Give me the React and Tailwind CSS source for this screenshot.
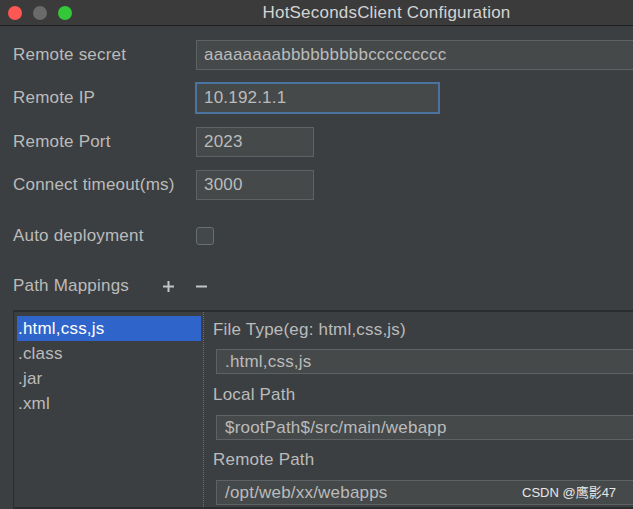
import React from "react";

const font = { fontFamily: '"Liberation Sans", "Noto Sans CJK SC", sans-serif' };

function Field({ label, children, top, height }) {
  return (
    <div className={`flex items-center ${top} ${height}`}>
      <div className="w-[183px] shrink-0 text-[17px] tracking-[0.2px] text-[#bbbbbb]">{label}</div>
      {children}
    </div>
  );
}

function TextBox({ value, size = "h-[30px]", className = "" }) {
  return (
    <div
      className={`${size} border border-[#5e6264] bg-[#45494a] px-[7px] flex items-center text-[17px] tracking-[0.2px] text-[#bbbbbb] whitespace-nowrap ${className}`}
    >
      {value}
    </div>
  );
}

function PanelLabel({ children, top }) {
  return (
    <div className={`${top} h-[24px] flex items-center text-[17px] tracking-[0.2px] text-[#bbbbbb]`}>
      {children}
    </div>
  );
}

export default function App() {
  const mappings = [".html,css,js", ".class", ".jar", ".xml"];

  return (
    <div
      className="relative w-[633px] h-[509px] overflow-hidden bg-[#3c3f41] flex flex-col"
      style={font}
    >
      {/* Title bar */}
      <div className="relative h-[26px] shrink-0 bg-[#3b3b3b] border-b border-[#1f1f1f] flex items-center">
        <div className="flex items-center gap-[11px] pl-[8px]">
          <span className="w-[14px] h-[14px] rounded-full bg-[#fd5753]" />
          <span className="w-[14px] h-[14px] rounded-full bg-[#6a6a6a]" />
          <span className="w-[14px] h-[14px] rounded-full bg-[#34c73a]" />
        </div>
        <div className="flex-1 text-center pl-[68px] text-[17px] tracking-[0.2px] text-[#d4d4d4]">
          HotSecondsClient Configuration
        </div>
      </div>

      {/* Form */}
      <div className="pl-[13px] flex flex-col">
        <Field label="Remote secret" top="mt-[14px]" height="h-[30px]">
          <TextBox value="aaaaaaaabbbbbbbbbccccccccc" className="flex-1 -mr-[4px]" />
        </Field>
        <Field label="Remote IP" top="mt-[12px]" height="h-[32px]">
          <div className="w-[245px] h-[32px] -ml-[1px] border-2 border-[#4a73a0] bg-[#45494a] px-[7px] flex items-center text-[17px] tracking-[0.2px] text-[#bbbbbb]">
            10.192.1.1
          </div>
        </Field>
        <Field label="Remote Port" top="mt-[13px]" height="h-[30px]">
          <TextBox value="2023" className="w-[118px]" />
        </Field>
        <Field label="Connect timeout(ms)" top="mt-[13px]" height="h-[30px]">
          <TextBox value="3000" className="w-[118px]" />
        </Field>
        <Field label="Auto deployment" top="mt-[22px]" height="h-[28px]">
          <div className="w-[18px] h-[18px] rounded-[3px] border border-[#6b6e70] bg-[#43484a]" />
        </Field>
        <div className="mt-[24px] h-[24px] flex items-center">
          <span className="text-[17px] tracking-[0.2px] text-[#bbbbbb]">Path Mappings</span>
          <svg className="ml-[33px]" width="13" height="13" viewBox="0 0 13 13">
            <path d="M6.5 1v11M1 6.5h11" stroke="#c4c4c4" strokeWidth="2" />
          </svg>
          <svg className="ml-[20px]" width="13" height="13" viewBox="0 0 13 13">
            <path d="M1 6.5h11" stroke="#c4c4c4" strokeWidth="2" />
          </svg>
        </div>
      </div>

      {/* Mapping panel */}
      <div className="ml-[13px] mt-[12px] flex-1 flex border-t-2 border-l border-b-2 border-[#2a2c2d] -mr-[4px]">
        <div className="w-[188px] shrink-0 pt-[4px] pl-[3px] pr-[1px]">
          {mappings.map((m, i) => (
            <div
              key={m}
              className={`h-[25px] flex items-center pl-[1px] text-[17px] tracking-[0.2px] ${
                i === 0 ? "bg-[#2f65ca] text-[#ffffff]" : "text-[#bbbbbb]"
              }`}
            >
              {m}
            </div>
          ))}
        </div>
        <div className="w-[3px] shrink-0 border-l border-dotted border-[#6a6d70] ml-[1px]" />
        <div className="flex-1 flex flex-col pl-[7px]">
          <PanelLabel top="mt-[6px]">File Type(eg: html,css,js)</PanelLabel>
          <TextBox value=".html,css,js" size="h-[25px]" className="mt-[7px] ml-[3px] pl-[8px]" />
          <PanelLabel top="mt-[9px]">Local Path</PanelLabel>
          <TextBox value="$rootPath$/src/main/webapp" size="h-[25px]" className="mt-[8px] ml-[3px] pl-[8px]" />
          <PanelLabel top="mt-[8px]">Remote Path</PanelLabel>
          <TextBox value="/opt/web/xx/webapps" size="h-[25px]" className="mt-[8px] ml-[3px] pl-[8px]" />
        </div>
      </div>

      {/* Watermark */}
      <div className="absolute left-[522px] top-[483px] text-[13px] text-[#e6e6e6]">CSDN @鹰影47</div>
    </div>
  );
}
